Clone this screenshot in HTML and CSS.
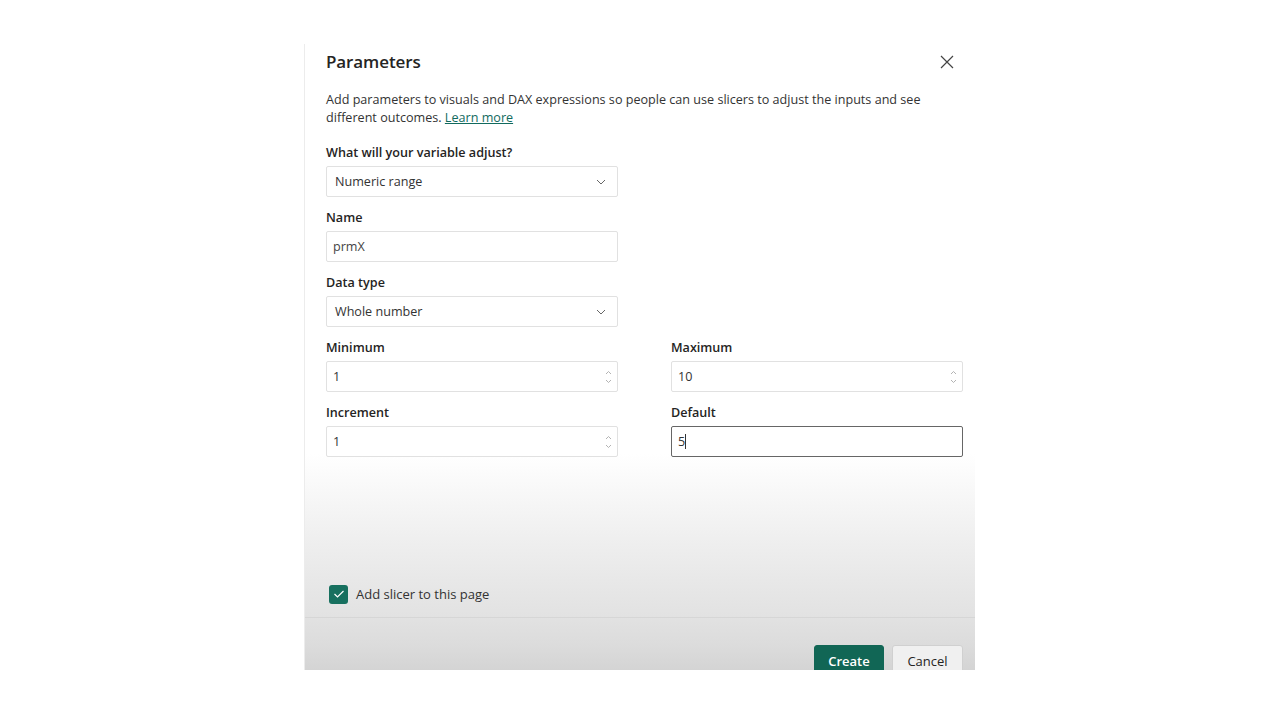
FILE: index.html
```html
<!DOCTYPE html>
<html>
<head>
<meta charset="utf-8">
<link rel="stylesheet" href="styles.css">
</head>
<body>
<div class="page">
  <div class="dialog">
    <div class="content">
      <div class="header">
        <h1 class="title">Parameters</h1>
        <svg class="close" width="14" height="14" viewBox="0 0 14 14"><path d="M1 1L13 13M13 1L1 13" stroke="#444" stroke-width="1.2" fill="none"/></svg>
      </div>
      <div class="desc">
        <div>Add parameters to visuals and DAX expressions so people can use slicers to adjust the inputs and see</div>
        <div><span>different outcomes.</span> <a class="link">Learn more</a></div>
      </div>

      <div class="field first">
        <div class="label">What will your variable adjust?</div>
        <div class="box select"><span class="val2">Numeric range</span><svg class="chev" width="10" height="6" viewBox="0 0 10 6"><path d="M1 1L5 5L9 1" stroke="#666" stroke-width="1" fill="none"/></svg></div>
      </div>
      <div class="field">
        <div class="label">Name</div>
        <div class="box"><span class="val">prmX</span></div>
      </div>
      <div class="field">
        <div class="label">Data type</div>
        <div class="box select"><span class="val2">Whole number</span><svg class="chev" width="10" height="6" viewBox="0 0 10 6"><path d="M1 1L5 5L9 1" stroke="#666" stroke-width="1" fill="none"/></svg></div>
      </div>
      <div class="grid">
        <div class="field">
          <div class="label">Minimum</div>
          <div class="box spin"><span class="val0">1</span><span class="arrows"><svg width="7" height="16" viewBox="0 0 7 16"><path d="M1 5L3.5 2.5L6 5M1 11L3.5 13.5L6 11" stroke="#aaa" stroke-width="0.9" fill="none"/></svg></span></div>
        </div>
        <div class="field">
          <div class="label">Maximum</div>
          <div class="box spin"><span class="val0">10</span><span class="arrows"><svg width="7" height="16" viewBox="0 0 7 16"><path d="M1 5L3.5 2.5L6 5M1 11L3.5 13.5L6 11" stroke="#aaa" stroke-width="0.9" fill="none"/></svg></span></div>
        </div>
        <div class="field">
          <div class="label">Increment</div>
          <div class="box spin"><span class="val0">1</span><span class="arrows"><svg width="7" height="16" viewBox="0 0 7 16"><path d="M1 5L3.5 2.5L6 5M1 11L3.5 13.5L6 11" stroke="#aaa" stroke-width="0.9" fill="none"/></svg></span></div>
        </div>
        <div class="field">
          <div class="label">Default</div>
          <div class="box focus"><span class="val0">5</span><span class="caret"></span></div>
        </div>
      </div>
    </div>
    <div class="check-row">
      <span class="checkbox"><svg width="12" height="10" viewBox="0 0 12 10"><path d="M1.5 5L4.5 8L10.5 2" stroke="#fff" stroke-width="1.2" fill="none"/></svg></span>
      <span class="check-label">Add slicer to this page</span>
    </div>
    <div class="footer">
      <button class="btn primary">Create</button>
      <button class="btn secondary">Cancel</button>
    </div>
  </div>
</div>
</body>
</html>
```

FILE: styles.css
```css
* { box-sizing: border-box; }
html, body { margin: 0; padding: 0; background: #fff; }
body { font-family: "Open Sans", "Noto Sans", sans-serif; color: #252423; }
.page { width: 1280px; height: 720px; padding: 44px 0 0 304px; }
.dialog {
  width: 671px;
  height: 626px;
  overflow: hidden;
  display: flex;
  flex-direction: column;
  border-left: 1px solid #ececec;
  background: linear-gradient(to bottom, #ffffff 0px, #ffffff 410px, #eeeeee 500px, #e2e2e2 572px, #dcdcdc 600px, #d4d4d4 626px);
}
.content { padding: 0 13px 0 21px; }
.header { display: flex; justify-content: space-between; align-items: center; height: 34px; }
.title { margin: 0; font-size: 17px; font-weight: 600; letter-spacing: -0.1px; }
.close { margin-right: 8px; margin-top: 2px; }
.desc { margin: 13px 0 0; font-size: 12.6px; line-height: 18px; color: #333; white-space: nowrap; }
.link { color: #116a5e; text-decoration: underline; }
.field { display: flex; flex-direction: column; }
.field.first { margin-top: 17px; }
.label { font-size: 12.6px; font-weight: 600; line-height: 18px; margin-bottom: 4px; }
.box {
  width: 292px; height: 31px;
  border: 1px solid #e1e1e1;
  border-radius: 2px;
  display: flex; align-items: center; justify-content: space-between;
  padding: 0 8px 0 6px;
  font-size: 12.6px;
  margin-bottom: 12px;
  background: #fff;
}
.select { padding-left: 8px; }
.val { color: #444; }
.val2 { color: #333; }
.val0 { color: #333; padding-left: 0; }
.chev { margin-right: 3px; }
.spin { padding-right: 5px; }
.arrows { display: flex; align-items: center; }
.focus { border: 1px solid #666; justify-content: flex-start; }
.caret { display: inline-block; width: 1px; height: 15px; background: #333; margin-left: 0; }
.grid { display: grid; grid-template-columns: 292px 292px; column-gap: 53px; }
.check-row { display: flex; align-items: center; gap: 8px; margin-top: auto; padding: 0 0 0 24px; height: 24px; margin-bottom: 11px; }
.checkbox { width: 19px; height: 19px; border-radius: 3px; background: #17705f; display: flex; align-items: center; justify-content: center; }
.check-label { font-size: 13px; color: #333; }
.footer { border-top: 1px solid #d6d6d6; height: 53px; display: flex; justify-content: flex-end; align-items: flex-start; gap: 8px; padding: 27px 12px 0 0; }
.btn { font-family: inherit; font-size: 13px; height: 32px; border-radius: 3px; padding: 0; }
.primary { width: 70px; background: #116655; color: #fff; border: 1px solid #116655; font-weight: 600; }
.secondary { width: 71px; background: #f0f0f0; color: #252423; border: 1px solid #d0d0d0; }
```
